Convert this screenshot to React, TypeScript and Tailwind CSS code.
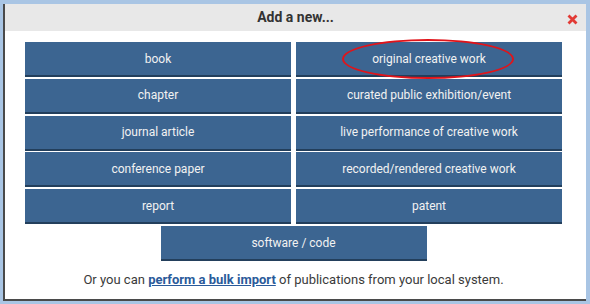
import React from "react";

const left = ["book", "chapter", "journal article", "conference paper", "report"];
const right = [
  "original creative work",
  "curated public exhibition/event",
  "live performance of creative work",
  "recorded/rendered creative work",
  "patent",
];

function Btn({ label }: { label: string }) {
  return (
    <button className="h-[35px] w-full bg-[#3c6591] border-b-2 border-[#233f5c] text-[12px] text-[#f2f2f2] flex items-center justify-center">
      {label}
    </button>
  );
}

export default function App() {
  const items: string[] = [];
  for (let i = 0; i < left.length; i++) {
    items.push(left[i], right[i]);
  }
  return (
    <div
      className="relative w-[590px] h-[304px] bg-[#a9c5e4] pt-[4px] pr-[4px] pb-[3px] pl-[3px]"
      style={{ fontFamily: "Roboto, 'Liberation Sans', sans-serif" }}
    >
      <div className="flex flex-col h-full bg-white border-l-2 border-b-2 border-[#4a4a4a]">
        <div className="relative h-[27px] bg-[#e8e8e8] flex items-center justify-center">
          <span className="text-[14px] font-bold text-[#333]">Add a new...</span>
          <svg
            className="absolute right-[8px] top-[10px]"
            width="11"
            height="11"
            viewBox="0 0 11 11"
          >
            <path d="M1.5 1.5 L9.5 9.5 M9.5 1.5 L1.5 9.5" stroke="#e23b35" strokeWidth="2.8" strokeLinecap="butt" />
          </svg>
        </div>
        <div className="flex flex-col pl-[20px] pr-[24px] pt-[11px]">
          <div className="grid grid-cols-2 gap-x-[5px] gap-y-[1.75px]">
            {items.map((t) => (
              <Btn key={t} label={t} />
            ))}
          </div>
          <div className="flex justify-center mt-[2px]">
            <div className="w-[266px]">
              <Btn label="software / code" />
            </div>
          </div>
          <p className="mt-[9px] text-center text-[13px] leading-[20px] text-[#3a3a3a]">
            Or you can{" "}
            <a className="font-bold text-[#2a5a9a] underline">perform a bulk import</a> of
            publications from your local system.
          </p>
        </div>
      </div>
      <div className="absolute left-[342px] top-[39px] w-[172px] h-[40px] rounded-[50%] border-2 border-[#e0141a]" />
    </div>
  );
}
